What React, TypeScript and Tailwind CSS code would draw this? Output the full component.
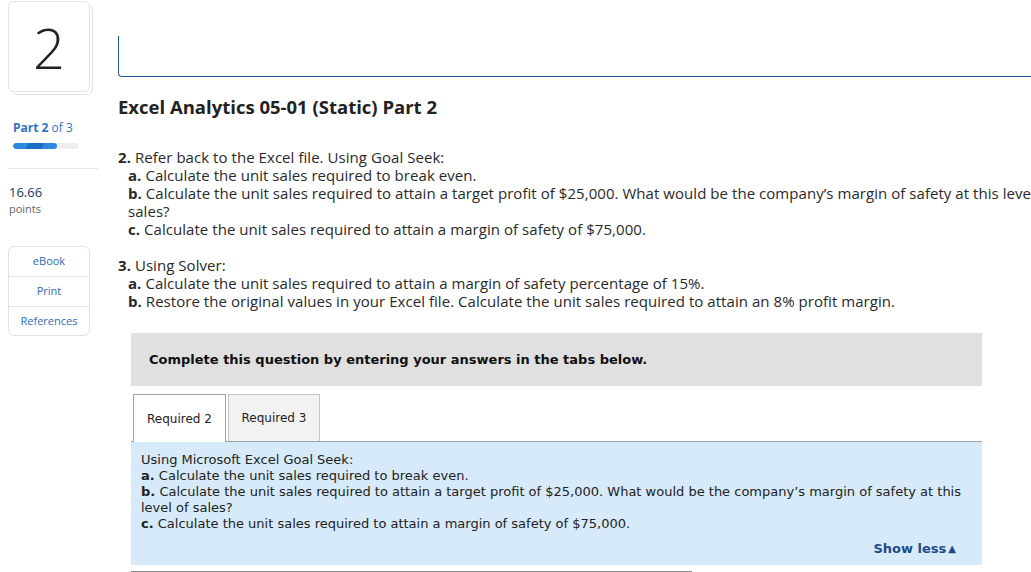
import React from "react";

const sans = { fontFamily: "'Open Sans', Lato, sans-serif" };
const verdana = { fontFamily: "'DejaVu Sans', Verdana, sans-serif" };

function Sidebar() {
  return (
    <div className="w-[100px] shrink-0 pl-2" style={sans}>
      {/* stacked question number card */}
      <div className="relative h-[95px] w-[86px] pt-px">
        <div className="absolute left-[3px] top-1 h-[91px] w-[82px] rounded-md border border-[#e4e4e4] bg-white" />
        <div className="relative flex h-[91px] w-[82px] items-center justify-center rounded-md border border-[#e4e4e4] bg-white text-[56px] font-light leading-none text-[#222]">
          2
        </div>
      </div>

      <div className="mt-[26px] pl-[5px] text-[12px] leading-[14px] text-[#2f74c0]">
        <span className="font-bold">Part 2</span> of 3
      </div>
      <div className="ml-[5px] mt-[8px] h-[6px] w-[66px] overflow-hidden rounded-full bg-[#eeeeee]">
        <div className="flex h-full w-[44px] overflow-hidden rounded-full bg-[#2b8ae0]">
          <div className="ml-[14px] h-full w-[16px] -skew-x-[30deg] bg-[#1a6fc4]" />
        </div>
      </div>

      <div className="mt-[19px] h-px w-[90px] bg-[#e6e6e6]" />

      <div className="mt-[15px] pl-[1px] text-[13px] leading-[16px] text-[#1d3b5e]">16.66</div>
      <div className="mt-[2px] pl-[1px] text-[11px] leading-[14px] text-[#666]">points</div>

      <div className="mt-[30px] w-[82px] overflow-hidden rounded-md border border-[#e2e2e2] text-center text-[11px] text-[#2f6cb8]">
        <div className="flex h-[30px] items-center justify-center border-b border-[#e2e2e2]">eBook</div>
        <div className="flex h-[30px] items-center justify-center border-b border-[#e2e2e2]">Print</div>
        <div className="flex h-[28px] items-center justify-center">References</div>
      </div>
    </div>
  );
}

function Main() {
  return (
    <div className="ml-[18px] w-[980px] shrink-0">
      <div className="mt-[36px] h-[41px] rounded-bl-[4px] border-b-[1.5px] border-l-[1.5px] border-[#1f5896]" />

      <h1 className="mt-[19px] text-[18.5px] font-bold leading-[22px] text-[#222]" style={sans}>
        Excel Analytics 05-01 (Static) Part 2
      </h1>

      <div className="mt-[30px] w-[962px] text-[15px] leading-[18px] tracking-[0.05px] text-[#2a2a2a]" style={sans}>
        <p>
          <b>2.</b> Refer back to the Excel file. Using Goal Seek:
        </p>
        <div className="pl-[10px]">
          <p>
            <b>a.</b> Calculate the unit sales required to break even.
          </p>
          <p>
            <b>b.</b> Calculate the unit sales required to attain a target profit of $25,000. What would be the company’s margin of safety at this level of sales?
          </p>
          <p>
            <b>c.</b> Calculate the unit sales required to attain a margin of safety of $75,000.
          </p>
        </div>

        <p className="mt-[18px]">
          <b>3.</b> Using Solver:
        </p>
        <div className="pl-[10px]">
          <p>
            <b>a.</b> Calculate the unit sales required to attain a margin of safety percentage of 15%.
          </p>
          <p>
            <b>b.</b> Restore the original values in your Excel file. Calculate the unit sales required to attain an 8% profit margin.
          </p>
        </div>
      </div>

      <div className="ml-[13px] w-[851px]" style={verdana}>
        <div className="mt-[23px] flex h-[53px] items-center bg-[#e0e0e0] pl-[18px] text-[13px] font-bold text-[#111]">
          Complete this question by entering your answers in the tabs below.
        </div>

        <div className="mt-[8px] flex h-[48px] items-end gap-[2px] border-b border-[#a3a3a3] pl-[2px]">
          <div className="-mb-px flex h-[48px] w-[93px] items-center justify-center border border-b-0 border-[#a3a3a3] bg-white text-[12px] text-[#222]">
            Required 2
          </div>
          <div className="flex h-[47px] w-[92px] items-center justify-center border border-b-0 border-[#c4c4c4] bg-[#f2f2f2] text-[12px] text-[#222]">
            Required 3
          </div>
        </div>

        <div className="h-[123px] bg-[#d7eaf9] pl-[10px] pr-[14px] pt-[10px] text-[13px] leading-[16px] text-[#222]">
          <p>Using Microsoft Excel Goal Seek:</p>
          <p>
            <b>a.</b> Calculate the unit sales required to break even.
          </p>
          <p>
            <b>b.</b> Calculate the unit sales required to attain a target profit of $25,000. What would be the company’s margin of safety at this level of sales?
          </p>
          <p>
            <b>c.</b> Calculate the unit sales required to attain a margin of safety of $75,000.
          </p>
          <div className="mt-[9px] flex justify-end pr-[12px] text-[13px] font-bold text-[#1e4a86]">
            Show less<span className="ml-[2px] text-[10px] leading-[16px]">▲</span>
          </div>
        </div>

        <div className="mt-[6px] h-px w-[561px] bg-[#888]" />
      </div>
    </div>
  );
}

export default function App() {
  return (
    <div className="flex h-[572px] w-[1031px] overflow-hidden bg-white">
      <Sidebar />
      <Main />
    </div>
  );
}
